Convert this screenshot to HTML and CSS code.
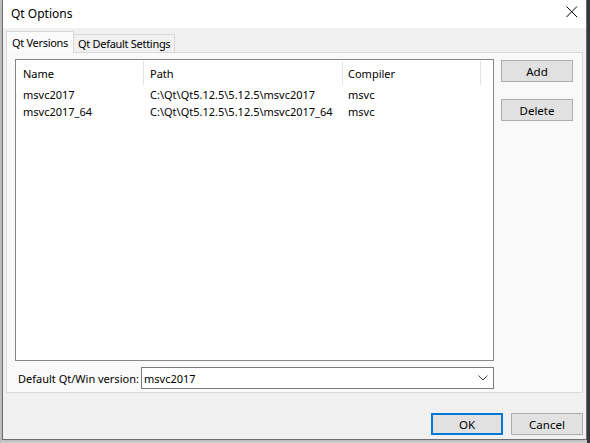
FILE: index.html
```html
<!DOCTYPE html>
<html>
<head>
<meta charset="utf-8">
<link rel="stylesheet" href="styles.css">
</head>
<body>
<div class="screen">
  <div class="left-strip"></div>
  <div class="window">
    <div class="titlebar">
      <span class="title">Qt Options</span>
      <svg class="close" width="12" height="12" viewBox="0 0 12 12"><path d="M0.5 0.5 L11 11 M11 0.5 L0.5 11" stroke="#000" stroke-width="1" fill="none"/></svg>
    </div>
    <div class="body">
      <div class="tabs">
        <div class="tab active">Qt Versions</div>
        <div class="tab">Qt Default Settings</div>
      </div>
      <div class="pane">
        <div class="top-row">
          <div class="list">
            <div class="header">
              <div class="col c1">Name</div>
              <div class="col c2">Path</div>
              <div class="col c3">Compiler</div>
              <div class="col c4"></div>
            </div>
            <div class="row">
              <div class="cell c1">msvc2017</div>
              <div class="cell c2">C:\Qt\Qt5.12.5\5.12.5\msvc2017</div>
              <div class="cell c3">msvc</div>
            </div>
            <div class="row">
              <div class="cell c1">msvc2017_64</div>
              <div class="cell c2">C:\Qt\Qt5.12.5\5.12.5\msvc2017_64</div>
              <div class="cell c3">msvc</div>
            </div>
          </div>
          <div class="side-buttons">
            <button class="btn">Add</button>
            <button class="btn">Delete</button>
          </div>
        </div>
        <div class="combo-row">
          <span class="combo-label">Default Qt/Win version:</span>
          <div class="combo">
            <span>msvc2017</span>
            <svg class="chev" width="10" height="6" viewBox="0 0 10 6"><path d="M0.5 0.5 L5 5 L9.5 0.5" stroke="#444" stroke-width="1" fill="none"/></svg>
          </div>
        </div>
      </div>
      <div class="footer">
        <button class="btn default">OK</button>
        <button class="btn">Cancel</button>
      </div>
    </div>
  </div>
  <div class="right-strip"></div>
</div>
</body>
</html>
```
FILE: styles.css
```css
* { box-sizing: border-box; }
html, body {
  margin: 0;
  padding: 0;
  background: #d8d8d8;
  width: 590px;
  height: 443px;
  overflow: hidden;
}
body {
  font-family: "Noto Sans", "Liberation Sans", sans-serif;
  font-size: 11px;
  color: #000;
}
.screen {
  display: flex;
  height: 443px;
}
.left-strip {
  width: 2px;
  background: #c4c4c4;
}
.right-strip {
  flex: 1;
  background: #35373b;
}
.window {
  width: 585px;
  height: 440px;
  border: 1px solid #6d6d6d;
  border-top: none;
  background: #f0f0f0;
  display: flex;
  flex-direction: column;
  box-shadow: 0 2px 3px rgba(0,0,0,0.15);
}
.titlebar {
  height: 28px;
  background: #fff;
  display: flex;
  align-items: center;
  justify-content: space-between;
  padding: 0 8px 2px 8px;
}
.title { font-size: 12px; }
.close { margin-top: -2px; }
.body {
  flex: 1;
  display: flex;
  flex-direction: column;
  padding: 3px 3px 0 3px;
}
.tabs {
  display: flex;
  align-items: flex-end;
  height: 21px;
  position: relative;
  z-index: 1;
}
.tab {
  height: 18px;
  padding: 0 4px;
  border: 1px solid #d9d9d9;
  border-bottom: none;
  background: #f0f0f0;
  display: flex;
  align-items: center;
  margin-left: -1px;
  white-space: nowrap;
  letter-spacing: -0.3px;
}
.tab.active {
  background: #fbfbfb;
  margin-left: 0;
  margin-bottom: -1px;
  padding: 0 5px 1px 5px;
  height: 22px;
}
.pane {
  height: 341px;
  border: 1px solid #d9d9d9;
  background: #f9f9f9;
  padding: 6px 9px 3px 8px;
  display: flex;
  flex-direction: column;
  gap: 6px;
}
.top-row {
  flex: 1;
  display: flex;
  gap: 7px;
}
.list {
  width: 480px;
  height: 302px;
  border: 1px solid #828790;
  background: #fff;
}
.header {
  display: flex;
  height: 26px;
  align-items: stretch;
}
.col {
  display: flex;
  align-items: center;
  border-right: 1px solid #e5e5e5;
  margin: 1px 0;
}
.header .c1 { width: 128px; padding-left: 7px; }
.header .c2 { width: 199px; padding-left: 6px; }
.header .c3 { width: 138px; padding-left: 5px; }
.header .c4 { flex: 1; border-right: none; }
.row {
  display: flex;
  height: 17px;
  align-items: center;
}
.cell { white-space: nowrap; }
.row .c1 { width: 128px; padding-left: 7px; }
.row .c2 { width: 199px; padding-left: 6px; }
.row .c3 { width: 138px; padding-left: 5px; }
.side-buttons {
  display: flex;
  flex-direction: column;
  gap: 17px;
  padding-top: 1px;
}
.btn {
  width: 72px;
  height: 22px;
  background: #e1e1e1;
  border: 1px solid #adadad;
  font-family: inherit;
  font-size: 11.5px;
  color: #000;
  padding: 0;
  margin: 0;
}
.btn.default {
  border: 2px solid #0078d7;
}
.combo-row {
  display: flex;
  align-items: center;
  height: 22px;
}
.combo-label {
  width: 126px;
  padding-left: 3px;
  white-space: nowrap;
}
.combo {
  width: 353px;
  height: 22px;
  border: 1px solid #7a7a7a;
  background: #fff;
  display: flex;
  align-items: center;
  justify-content: space-between;
  padding: 0 5px 0 2px;
}
.footer {
  display: flex;
  justify-content: flex-end;
  gap: 8px;
  padding: 20px 0 0 0;
}
```
